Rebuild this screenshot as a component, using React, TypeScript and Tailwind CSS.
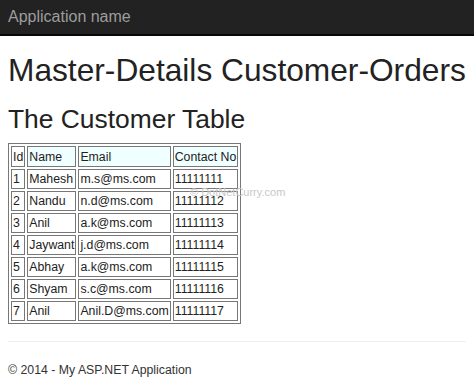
import React from "react"

const customers = [
  { id: 1, name: "Mahesh", email: "m.s@ms.com", contact: "11111111" },
  { id: 2, name: "Nandu", email: "n.d@ms.com", contact: "11111112" },
  { id: 3, name: "Anil", email: "a.k@ms.com", contact: "11111113" },
  { id: 4, name: "Jaywant", email: "j.d@ms.com", contact: "11111114" },
  { id: 5, name: "Abhay", email: "a.k@ms.com", contact: "11111115" },
  { id: 6, name: "Shyam", email: "s.c@ms.com", contact: "11111116" },
  { id: 7, name: "Anil", email: "Anil.D@ms.com", contact: "11111117" },
]

export default function App() {
  return (
    <div className="relative min-h-[383px] bg-white text-[#333] font-['Liberation_Sans',Arial,sans-serif] text-[12.3px]">
      {/* navbar */}
      <div className="h-[36px] bg-[#222] border-b-2 border-[#080808] flex items-center px-2">
        <span className="text-[16px] text-[#9d9d9d]">Application name</span>
      </div>

      <div className="px-2">
        <h1 className="text-[31.7px] leading-[35px] mt-[17px] text-[#222]">Master-Details Customer-Orders</h1>
        <h2 className="text-[26.4px] leading-[29px] mt-[17px] text-[#222]">The Customer Table</h2>

        <table className="mt-[9px] border-separate border-spacing-[2px] border border-[#777] text-[12.3px] leading-[16px] text-[#222]">
          <thead>
            <tr className="h-[21px]">
              <td className="border border-[#777] px-px">Id</td>
              <td className="border border-[#777] px-px bg-[#f0ffff]">Name</td>
              <td className="border border-[#777] px-px bg-[#f0ffff]">Email</td>
              <td className="border border-[#777] px-px bg-[#f0ffff]">Contact No</td>
            </tr>
          </thead>
          <tbody>
            {customers.map((c) => (
              <tr key={c.id} className="h-[20px]">
                <td className="border border-[#777] px-px">{c.id}</td>
                <td className="border border-[#777] px-px">{c.name}</td>
                <td className="border border-[#777] px-px">{c.email}</td>
                <td className="border border-[#777] px-px">{c.contact}</td>
              </tr>
            ))}
          </tbody>
        </table>

        <hr className="mt-[17px] border-t border-[#eee]" />
        <footer className="mt-[19px]">
          <p>© 2014 - My ASP.NET Application</p>
        </footer>
      </div>

      {/* watermark */}
      <span className="absolute left-[190px] top-[184px] text-[11px] text-[#c8c8c8]">© DotNetCurry.com</span>
    </div>
  )
}
